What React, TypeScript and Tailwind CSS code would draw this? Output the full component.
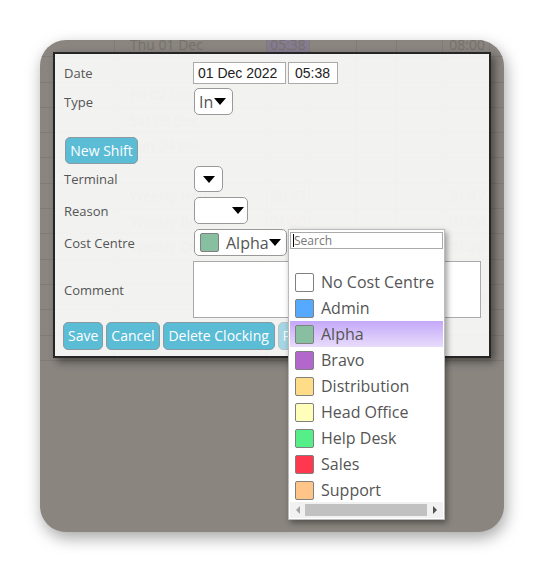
const centres = [
  { name: 'No Cost Centre', color: '#ffffff' },
  { name: 'Admin', color: '#55aaff' },
  { name: 'Alpha', color: '#88bfa0' },
  { name: 'Bravo', color: '#b366cc' },
  { name: 'Distribution', color: '#ffdd88' },
  { name: 'Head Office', color: '#ffffbb' },
  { name: 'Help Desk', color: '#55ee88' },
  { name: 'Sales', color: '#ff3850' },
  { name: 'Support', color: '#ffc488' },
]

const rows = [
  ['', 'Thu 01 Dec', '05:38', '', '', '', '08:00'],
  ['', '', 'Service', '', '', '', ''],
  ['', 'Fri 02 Dec', '', '', '', '', ''],
  ['', 'Sat 03 Dec', '', '', '', '', ''],
  ['', 'Sun 04 Dec', '', '', '', '', ''],
  ['', '', '', '', '', '', ''],
  ['', 'Weekly Hours', '30:47', '', '', '', '31:47'],
  ['', 'Weekly Break', '01:00', '', '', '', '01:00'],
  ['', 'Weekly Over', '00:00', '', '', '', '01:26'],
  ['', '', '', '', '', '', '0'],
  ['', '', '', '', '', '', '2.0'],
  ['', '', '', '', '', '', ''],
  ['', '', '', '', '', '', ''],
]

function Arrow() {
  return <span className="block w-0 h-0 border-x-[6px] border-x-transparent border-t-[7px] border-t-black" />
}

function Swatch({ color }: { color: string }) {
  return <span className="block w-[19px] h-[19px] shrink-0 rounded-[2px] border border-[#808080]" style={{ backgroundColor: color }} />
}

function Label({ children }: { children: string }) {
  return <span className="w-[129px] shrink-0 pt-[2px] text-[13px] text-[#555]">{children}</span>
}

function BlueButton({ children, faded }: { children: string; faded?: boolean }) {
  return (
    <button
      className={`h-[28px] px-[4px] rounded-[5px] border border-[#8a9aa0] bg-[#5bbcd6] text-white text-[14px] leading-none ${faded ? 'opacity-50' : ''}`}
    >
      {children}
    </button>
  )
}

export default function App() {
  return (
    <div className="w-[544px] h-[572px] bg-white pt-[40px] pl-[40px] font-['Open_Sans',sans-serif]">
      <div className="relative w-[464px] h-[492px] rounded-[26px] overflow-hidden bg-[#8a857f] shadow-[2px_6px_16px_rgba(0,0,0,0.35)]">
        {/* background schedule under the overlay */}
        <div className="-mt-[8px] flex flex-col text-[14px] text-[#76716c]">
          {rows.map((r, i) => (
            <div key={i} className="h-[25.3px] flex border-b border-[#807b76]">
              <div className="w-[75px] border-r border-[#807b76]" />
              <div className="w-[152px] pl-[15px] flex items-center border-r border-[#807b76]">{r[1]}</div>
              <div className={`w-[43px] flex items-center justify-center border-r border-[#807b76] ${i === 0 ? 'bg-[#867c90]' : ''}`}>{r[2]}</div>
              <div className="w-[47px] border-r border-[#807b76]" />
              <div className="w-[40px] border-r border-[#807b76]" />
              <div className="w-[46px] border-r border-[#807b76]" />
              <div className="w-[47px] flex items-center justify-end pr-[4px] border-r border-[#807b76]">{r[6]}</div>
              <div className="flex-1" />
            </div>
          ))}
        </div>

        {/* clocking dialog */}
        <div className="absolute left-[13px] top-[12px] w-[438px] h-[306px] border-2 border-[#262626] bg-white/[0.89] shadow-[4px_4px_8px_rgba(0,0,0,0.45)]">
          <div className="flex flex-col pl-[9px]">
            <div className="mt-[8px] h-[22px] flex items-center">
              <Label>Date</Label>
              <input
                readOnly
                value="01 Dec 2022"
                className="w-[93px] h-[22px] border border-[#aaa] bg-white px-[4px] text-[14px] text-[#222] font-['Liberation_Sans',sans-serif] outline-none"
              />
              <input
                readOnly
                value="05:38"
                className="ml-[2px] w-[50px] h-[22px] border border-[#aaa] bg-white px-[6px] text-[14px] text-[#222] font-['Liberation_Sans',sans-serif] outline-none"
              />
            </div>
            <div className="mt-[4px] h-[27px] flex items-center">
              <Label>Type</Label>
              <div className="ml-[1px] w-[39px] h-[27px] rounded-[5px] border border-[#999] bg-white flex items-center pl-[4px] gap-[1px]">
                <span className="text-[16px] text-[#555] leading-none">In</span>
                <Arrow />
              </div>
            </div>
            <div className="mt-[22px] h-[27px] flex items-center pl-[1px]">
              <button className="w-[73px] h-[27px] rounded-[5px] border border-[#8a9aa0] bg-[#5bbcd6] text-white text-[14px] leading-none">
                New Shift
              </button>
            </div>
            <div className="mt-[2px] h-[26px] flex items-center">
              <Label>Terminal</Label>
              <div className="ml-[1px] w-[29px] h-[26px] rounded-[5px] border border-[#999] bg-white flex items-center justify-center">
                <Arrow />
              </div>
            </div>
            <div className="mt-[5px] h-[27px] flex items-center">
              <Label>Reason</Label>
              <div className="ml-[1px] w-[54px] h-[27px] rounded-[5px] border border-[#999] bg-white flex items-center justify-end pr-[3px]">
                <Arrow />
              </div>
            </div>
            <div className="mt-[5px] h-[27px] flex items-center">
              <Label>Cost Centre</Label>
              <div className="ml-[1px] w-[93px] h-[27px] rounded-[5px] border border-[#999] bg-white flex items-center pl-[5px]">
                <Swatch color="#88bfa0" />
                <span className="ml-[7px] text-[16px] text-[#555] leading-none">Alpha</span>
                <Arrow />
              </div>
            </div>
            <div className="mt-[5px] h-[57px] flex items-center">
              <Label>Comment</Label>
              <textarea readOnly className="w-[288px] h-[57px] border border-[#aaa] bg-white resize-none outline-none" />
            </div>
            <div className="mt-[4px] h-[28px] flex items-center gap-[3px] -ml-[1px]">
              <BlueButton>Save</BlueButton>
              <BlueButton>Cancel</BlueButton>
              <button className="h-[28px] w-[112px] rounded-[5px] border border-[#8a9aa0] bg-[#5bbcd6] text-white text-[14px] leading-none">
                Delete Clocking
              </button>
              <BlueButton faded>Print</BlueButton>
            </div>
          </div>
        </div>

        {/* cost centre picker */}
        <div className="absolute left-[248px] top-[189px] w-[157px] h-[291px] border border-[#bbb] bg-white shadow-[2px_3px_6px_rgba(0,0,0,0.4)] flex flex-col px-[1px]">
          <div className="mt-[2px] h-[17px] border border-[#aaa] flex items-center pl-[2px]">
            <span className="w-px h-[13px] bg-black" />
            <span className="text-[12px] text-[#777] leading-none">Search</span>
          </div>
          <div className="mt-[20px] flex flex-col">
            {centres.map((c) => (
              <div
                key={c.name}
                className={`h-[26px] flex items-center pl-[5px] gap-[7px] ${c.name === 'Alpha' ? 'bg-gradient-to-b from-[#c4a8f8] to-[#e8dcfb]' : ''}`}
              >
                <Swatch color={c.color} />
                <span className="text-[16px] text-[#555] leading-none whitespace-nowrap">{c.name}</span>
              </div>
            ))}
          </div>
          <div className="mt-[-1px] h-[16px] bg-[#f1f1f1] flex items-center">
            <div className="w-[15px] flex justify-center">
              <span className="block w-0 h-0 border-y-[4px] border-y-transparent border-r-[4px] border-r-[#a3a3a3]" />
            </div>
            <div className="w-[122px] h-[12px] bg-[#c1c1c1]" />
            <div className="flex-1 flex justify-center">
              <span className="block w-0 h-0 border-y-[4px] border-y-transparent border-l-[4px] border-l-[#505050]" />
            </div>
          </div>
        </div>
      </div>
    </div>
  )
}
